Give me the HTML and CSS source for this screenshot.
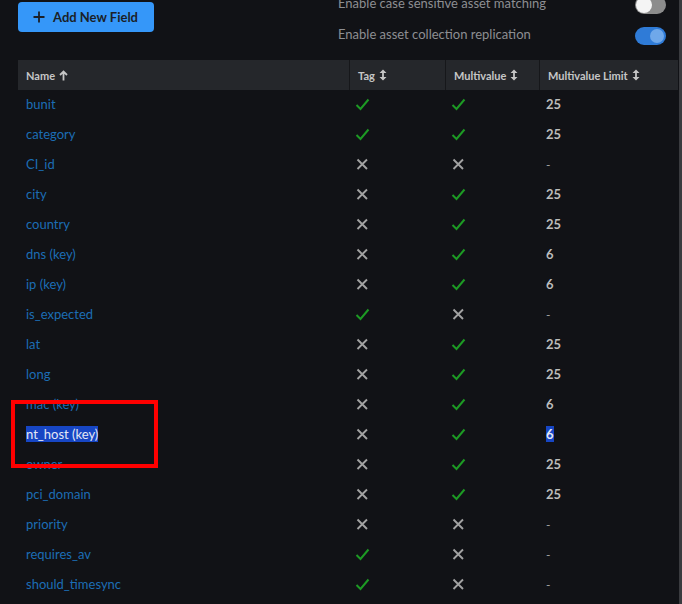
FILE: index.html
```html
<!DOCTYPE html>
<html>
<head>
<meta charset="utf-8">
<link rel="stylesheet" href="styles.css">
</head>
<body>
<div class="page">
  <div class="top">
    <button class="add-btn">
      <svg class="plus" width="12" height="12" viewBox="0 0 12 12"><path d="M6 0.5V11.5M0.5 6H11.5" stroke="#1b1f27" stroke-width="1.8"/></svg>
      <span>Add New Field</span>
    </button>
    <div class="settings">
      <div class="setting first">
        <span class="label">Enable case sensitive asset matching</span>
        <span class="toggle off"><span class="knob"></span></span>
      </div>
      <div class="setting">
        <span class="label">Enable asset collection replication</span>
        <span class="toggle on"><span class="knob"></span></span>
      </div>
    </div>
  </div>

  <div class="table">
    <div class="row head">
      <div class="cell c-name">Name <svg class="sort" width="9" height="11" viewBox="0 0 9 11"><path d="M4.5 10.5V1.5M1 5L4.5 1.5L8 5" fill="none" stroke="#c6c6c6" stroke-width="1.8"/></svg></div>
      <div class="cell c-tag sep">Tag <svg class="sort" width="8" height="12" viewBox="0 0 8 12"><path d="M0.5 4L4 0.5L7.5 4Z M0.5 8L4 11.5L7.5 8Z" fill="#c6c6c6"/><path d="M4 3V9" stroke="#c6c6c6" stroke-width="1.8"/></svg></div>
      <div class="cell c-mv sep">Multivalue <svg class="sort" width="8" height="12" viewBox="0 0 8 12"><path d="M0.5 4L4 0.5L7.5 4Z M0.5 8L4 11.5L7.5 8Z" fill="#c6c6c6"/><path d="M4 3V9" stroke="#c6c6c6" stroke-width="1.8"/></svg></div>
      <div class="cell c-lim sep">Multivalue Limit <svg class="sort" width="8" height="12" viewBox="0 0 8 12"><path d="M0.5 4L4 0.5L7.5 4Z M0.5 8L4 11.5L7.5 8Z" fill="#c6c6c6"/><path d="M4 3V9" stroke="#c6c6c6" stroke-width="1.8"/></svg></div>
    </div>
    <div id="rows"></div>
  </div>

  <div class="annotation"></div>
</div>
<script src="script.js"></script>
</body>
</html>
```

FILE: script.js
```js
var data = [
  ["bunit",1,1,"25"],
  ["category",1,1,"25"],
  ["CI_id",0,0,"-"],
  ["city",0,1,"25"],
  ["country",0,1,"25"],
  ["dns (key)",0,1,"6"],
  ["ip (key)",0,1,"6"],
  ["is_expected",1,0,"-"],
  ["lat",0,1,"25"],
  ["long",0,1,"25"],
  ["mac (key)",0,1,"6"],
  ["nt_host (key)",0,1,"6",true],
  ["owner",0,1,"25"],
  ["pci_domain",0,1,"25"],
  ["priority",0,0,"-"],
  ["requires_av",1,0,"-"],
  ["should_timesync",1,0,"-"]
];
var check = '<svg class="ico" width="15" height="13" viewBox="0 0 15 13"><path d="M1.5 7L5.5 11L13.5 1.5" fill="none" stroke="#1d9a24" stroke-width="2"/></svg>';
var cross = '<svg class="ico" width="15" height="13" viewBox="0 0 15 13"><path d="M2.5 1.5L12 11M12 1.5L2.5 11" fill="none" stroke="#a2a2a2" stroke-width="1.9"/></svg>';
var html = "";
data.forEach(function (d) {
  var sel = d[4];
  var lim = d[3] === "-" ? '<span class="dash">-</span>' : '<span class="num' + (sel ? ' sel' : '') + '">' + d[3] + '</span>';
  html += '<div class="row">' +
    '<div class="cell c-name"><span class="name' + (sel ? ' sel' : '') + '">' + d[0] + '</span></div>' +
    '<div class="cell c-tag">' + (d[1] ? check : cross) + '</div>' +
    '<div class="cell c-mv">' + (d[2] ? check : cross) + '</div>' +
    '<div class="cell c-lim">' + lim + '</div>' +
    '</div>';
});
document.getElementById("rows").innerHTML = html;
```

FILE: styles.css
```css
html, body {
  margin: 0;
  padding: 0;
  background: #111216;
  height: 604px;
  overflow: hidden;
}
.page {
  position: relative;
  width: 679px;
  height: 604px;
  border-right: 3px solid #3a3b3f;
  font-family: Lato, "Open Sans", sans-serif;
  overflow: hidden;
}
.top {
  display: flex;
  justify-content: space-between;
  height: 60px;
  padding-left: 18px;
}
.add-btn {
  margin-top: 2px;
  width: 136px;
  height: 30px;
  border: none;
  border-radius: 4px;
  background: #3597f9;
  color: #1b1f27;
  font-family: Lato, sans-serif;
  font-weight: 700;
  font-size: 13px;
  display: flex;
  align-items: center;
  padding: 0 0 0 15px;
  gap: 8px;
}
.settings {
  width: 328px;
  margin-right: 13px;
  margin-top: -5px;
  display: flex;
  flex-direction: column;
  gap: 12px;
}
.setting {
  display: flex;
  justify-content: space-between;
  align-items: center;
  height: 19px;
}
.label {
  color: #8d8e92;
  font-size: 13px;
  margin-top: -4px;
}
.toggle {
  position: relative;
  width: 31px;
  height: 18px;
  border-radius: 9px;
}
.toggle.off { background: #8c8c8c; }
.toggle.on { background: #2f7bd7; }
.knob {
  position: absolute;
  top: 2px;
  width: 14px;
  height: 14px;
  border-radius: 50%;
}
.toggle.off .knob { left: 1px; background: #f4f4f4; top: 1px; width: 16px; height: 16px; }
.toggle.on .knob { right: 2px; background: #6fa8ea; }

.table {
  margin-left: 18px;
  width: 660px;
}
.row {
  display: flex;
  height: 30px;
  align-items: center;
}
.row.head {
  background: #25272b;
  font-weight: 700;
  font-size: 11px;
  color: #c6c6c6;
}
.cell {
  height: 100%;
  display: flex;
  align-items: center;
  box-sizing: border-box;
  padding-left: 8px;
  gap: 4px;
}
.c-name { width: 331px; }
.c-tag { width: 96px; }
.c-mv { width: 94px; }
.c-lim { width: 139px; }
.sep { border-left: 1px solid #16171a; }
.row:not(.head) .c-tag,
.row:not(.head) .c-mv { padding-left: 6px; }
.row:not(.head) .c-lim { padding-left: 7px; }
.row:not(.head) .cell { padding-bottom: 2px; }
.name {
  color: #1c6db4;
  font-size: 13px;
}
.name.sel, .num.sel {
  background: #1746c4;
  color: #e4e8f4;
}
.num {
  color: #bcbcbc;
  font-size: 13px;
  font-weight: 700;
}
.dash {
  color: #a8a8a8;
  font-size: 12px;
}
.annotation {
  position: absolute;
  left: 11px;
  top: 400px;
  width: 139px;
  height: 60px;
  border: 4px solid #ff0000;
}
```
